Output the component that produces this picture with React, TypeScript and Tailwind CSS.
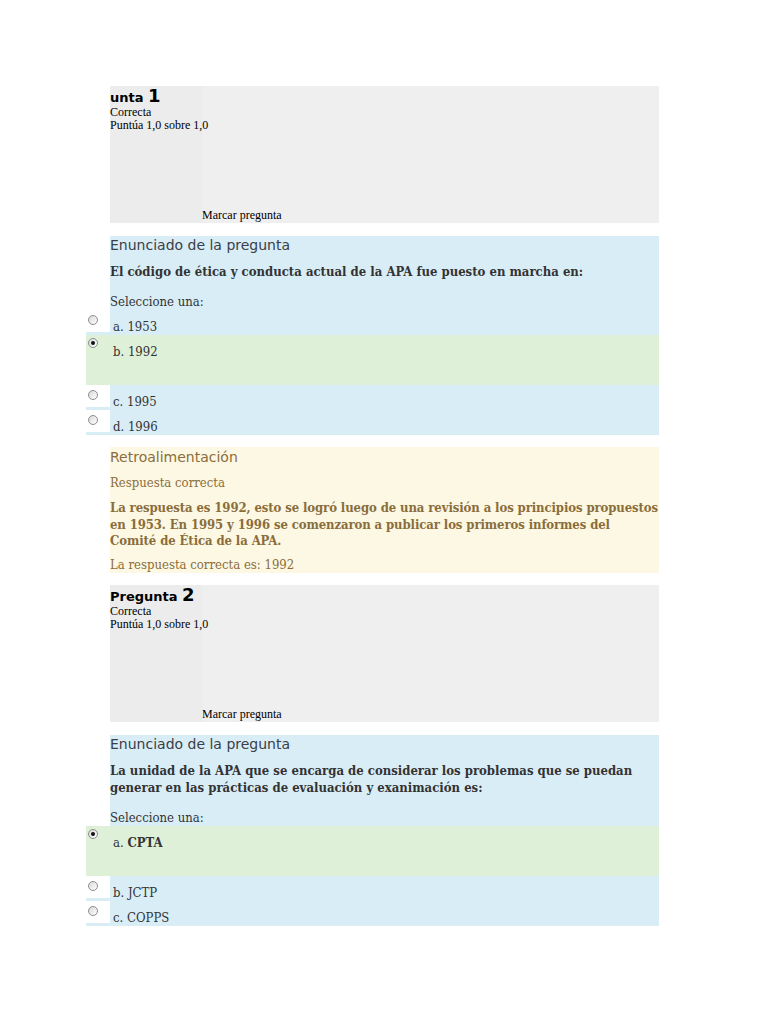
import React from 'react';

type Option = { label: string; text: string; bold?: boolean; selected?: boolean };

const serif = "font-['Liberation_Serif',serif]";
const body = "font-['DejaVu_Serif_Condensed','DejaVu_Serif',serif] [font-stretch:condensed]";
const sans = "font-['DejaVu_Sans',sans-serif]";

const Radio: React.FC<{ checked?: boolean }> = ({ checked }) => (
    <span className="flex h-[10px] w-[10px] items-center justify-center rounded-full border border-[#8e8e8e] bg-gradient-to-br from-[#d8d8d8] to-white">
        {checked && <span className="h-[4px] w-[4px] rounded-full bg-[#111]" />}
    </span>
);

const Header: React.FC<{ title: string; num: string }> = ({ title, num }) => (
    <div className="ml-[24px] flex h-[137px] bg-[#efefef]">
        <div className="w-[92px] whitespace-nowrap bg-[#ececec] text-black">
            <div className={`${sans} h-[20px] font-bold leading-[20px]`}>
                <span className="text-[13px]">{title} </span>
                <span className="text-[18px]">{num}</span>
            </div>
            <div className={`${serif} text-[12px] leading-[13px]`}>Correcta</div>
            <div className={`${serif} text-[12px] leading-[13px]`}>Puntúa 1,0 sobre 1,0</div>
        </div>
        <div className="flex flex-1 items-end">
            <span className={`${serif} pb-[1px] text-[12px] leading-[14px] text-black`}>Marcar pregunta</span>
        </div>
    </div>
);

const OptionRow: React.FC<{ opt: Option }> = ({ opt }) => {
    if (opt.selected) {
        return (
            <div className="flex h-[50px] bg-[#dff0d8]">
                <div className="w-[24px] pl-[2px] pt-[3px]">
                    <Radio checked />
                </div>
                <div className={`${body} pl-[3px] pt-[8px] text-[13px] leading-[17px] text-[#333]`}>
                    {opt.label} <span className={opt.bold ? 'font-bold' : ''}>{opt.text}</span>
                </div>
            </div>
        );
    }
    return (
        <div className="flex h-[25px] bg-[#d9edf7]">
            <div className="h-[22px] w-[24px] bg-white pl-[2px] pt-[5px]">
                <Radio />
            </div>
            <div className={`${body} pl-[3px] pt-[8px] text-[13px] leading-[17px] text-[#333]`}>
                {opt.label} {opt.text}
            </div>
        </div>
    );
};

const Question: React.FC<{ text: string; options: Option[] }> = ({ text, options }) => (
    <div className="mt-[13px]">
        <div className="ml-[24px] bg-[#d9edf7]">
            <div className={`${sans} text-[14px] leading-[18px] text-[#3a4046]`}>Enunciado de la pregunta</div>
            <div className={`${body} mt-[9px] pr-2 text-[13px] font-bold leading-[17px] text-[#333]`}>{text}</div>
            <div className={`${body} mt-[13px] text-[13px] leading-[17px] text-[#333]`}>Seleccione una:</div>
        </div>
        <div>
            {options.map((o) => (
                <OptionRow key={o.label} opt={o} />
            ))}
        </div>
    </div>
);

const App: React.FC = () => {
    return (
        <main className="min-h-[1024px] w-[768px] bg-white">
            <div className="w-[659px] pl-[86px] pt-[86px]">
                <Header title="unta" num="1" />
                <Question
                    text="El código de ética y conducta actual de la APA fue puesto en marcha en:"
                    options={[
                        { label: 'a.', text: '1953' },
                        { label: 'b.', text: '1992', selected: true },
                        { label: 'c.', text: '1995' },
                        { label: 'd.', text: '1996' },
                    ]}
                />
                <div className="ml-[24px] mt-[12px] h-[126px] bg-[#fcf8e3] pt-[1px] text-[#8a6d3b]">
                    <div className={`${sans} text-[14px] leading-[18px]`}>Retroalimentación</div>
                    <div className={`${body} mt-[8px] text-[13px] leading-[17px]`}>Respuesta correcta</div>
                    <div className={`${body} mt-[9px] whitespace-nowrap text-[13px] font-bold leading-[16.5px] tracking-[-0.1px]`}>
                        La respuesta es 1992, esto se logró luego de una revisión a los principios propuestos
                        <br />
                        en 1953. En 1995 y 1996 se comenzaron a publicar los primeros informes del
                        <br />
                        Comité de Ética de la APA.
                    </div>
                    <div className={`${body} mt-[6px] text-[13px] leading-[17px]`}>La respuesta correcta es: 1992</div>
                </div>
                <div className="mt-[12px]">
                    <Header title="Pregunta" num="2" />
                </div>
                <Question
                    text="La unidad de la APA que se encarga de considerar los problemas que se puedan generar en las prácticas de evaluación y exanimación es:"
                    options={[
                        { label: 'a.', text: 'CPTA', bold: true, selected: true },
                        { label: 'b.', text: 'JCTP' },
                        { label: 'c.', text: 'COPPS' },
                    ]}
                />
            </div>
        </main>
    );
};

export default App;
